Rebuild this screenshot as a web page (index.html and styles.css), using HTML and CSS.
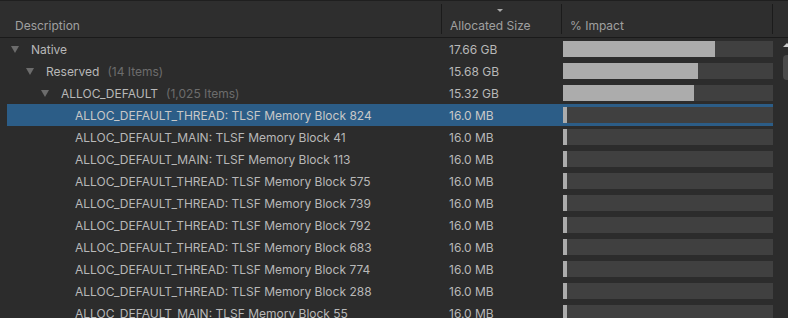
FILE: index.html
```html
<!DOCTYPE html>
<html lang="en">
<head>
    <meta charset="UTF-8">
    <title>Memory Profiler - All Of Memory</title>
    <link rel="stylesheet" href="styles.css">
</head>
<body>
    <div class="tree-view">
        <div class="header">
            <div class="head-cell col-desc">Description</div>
            <div class="head-cell col-size"><span class="sort-arrow"></span>Allocated Size</div>
            <div class="head-cell col-impact">% Impact</div>
            <div class="head-rest"></div>
        </div>

        <div class="body">
            <div class="rows">
                <div class="row">
                    <div class="cell col-desc level-0"><span class="fold"></span>Native</div>
                    <div class="cell col-size">17.66 GB</div>
                    <div class="cell col-impact"><div class="bar"><div class="fill" style="width: 152px"></div></div></div>
                </div>
                <div class="row">
                    <div class="cell col-desc level-1"><span class="fold"></span>Reserved<span class="count">(14 Items)</span></div>
                    <div class="cell col-size">15.68 GB</div>
                    <div class="cell col-impact"><div class="bar"><div class="fill" style="width: 135px"></div></div></div>
                </div>
                <div class="row">
                    <div class="cell col-desc level-2"><span class="fold"></span>ALLOC_DEFAULT<span class="count">(1,025 Items)</span></div>
                    <div class="cell col-size">15.32 GB</div>
                    <div class="cell col-impact"><div class="bar"><div class="fill" style="width: 131px"></div></div></div>
                </div>
                <div class="row selected">
                    <div class="cell col-desc level-3">ALLOC_DEFAULT_THREAD: TLSF Memory Block 824</div>
                    <div class="cell col-size">16.0 MB</div>
                    <div class="cell col-impact"><div class="bar"><div class="fill small"></div></div></div>
                </div>
                <div class="row">
                    <div class="cell col-desc level-3">ALLOC_DEFAULT_MAIN: TLSF Memory Block 41</div>
                    <div class="cell col-size">16.0 MB</div>
                    <div class="cell col-impact"><div class="bar"><div class="fill small"></div></div></div>
                </div>
                <div class="row">
                    <div class="cell col-desc level-3">ALLOC_DEFAULT_MAIN: TLSF Memory Block 113</div>
                    <div class="cell col-size">16.0 MB</div>
                    <div class="cell col-impact"><div class="bar"><div class="fill small"></div></div></div>
                </div>
                <div class="row">
                    <div class="cell col-desc level-3">ALLOC_DEFAULT_THREAD: TLSF Memory Block 575</div>
                    <div class="cell col-size">16.0 MB</div>
                    <div class="cell col-impact"><div class="bar"><div class="fill small"></div></div></div>
                </div>
                <div class="row">
                    <div class="cell col-desc level-3">ALLOC_DEFAULT_THREAD: TLSF Memory Block 739</div>
                    <div class="cell col-size">16.0 MB</div>
                    <div class="cell col-impact"><div class="bar"><div class="fill small"></div></div></div>
                </div>
                <div class="row">
                    <div class="cell col-desc level-3">ALLOC_DEFAULT_THREAD: TLSF Memory Block 792</div>
                    <div class="cell col-size">16.0 MB</div>
                    <div class="cell col-impact"><div class="bar"><div class="fill small"></div></div></div>
                </div>
                <div class="row">
                    <div class="cell col-desc level-3">ALLOC_DEFAULT_THREAD: TLSF Memory Block 683</div>
                    <div class="cell col-size">16.0 MB</div>
                    <div class="cell col-impact"><div class="bar"><div class="fill small"></div></div></div>
                </div>
                <div class="row">
                    <div class="cell col-desc level-3">ALLOC_DEFAULT_THREAD: TLSF Memory Block 774</div>
                    <div class="cell col-size">16.0 MB</div>
                    <div class="cell col-impact"><div class="bar"><div class="fill small"></div></div></div>
                </div>
                <div class="row">
                    <div class="cell col-desc level-3">ALLOC_DEFAULT_THREAD: TLSF Memory Block 288</div>
                    <div class="cell col-size">16.0 MB</div>
                    <div class="cell col-impact"><div class="bar"><div class="fill small"></div></div></div>
                </div>
                <div class="row">
                    <div class="cell col-desc level-3">ALLOC_DEFAULT_MAIN: TLSF Memory Block 55</div>
                    <div class="cell col-size">16.0 MB</div>
                    <div class="cell col-impact"><div class="bar"><div class="fill small"></div></div></div>
                </div>
            </div>

            <div class="scrollbar">
                <span class="scroll-up"></span>
                <div class="thumb"></div>
            </div>
        </div>
    </div>
</body>
</html>
```

FILE: styles.css
```css
* {
    margin: 0;
    padding: 0;
    box-sizing: border-box;
}

html, body {
    width: 788px;
    height: 318px;
    overflow: hidden;
}

body {
    background: #2c2c2c;
    font-family: Inter, 'Liberation Sans', sans-serif;
    font-size: 12px;
    color: #b8b8b8;
}

.tree-view {
    width: 788px;
}

/* 表头 */
.header {
    display: flex;
    height: 38px;
    border-top: 1px solid #1f1f1f;
    border-bottom: 1px solid #1a1a1a;
    background: #2e2e2e;
}

.head-cell {
    position: relative;
    display: flex;
    align-items: flex-end;
    padding-bottom: 4px;
    color: #a0a0a0;
}

.head-cell::after {
    content: '';
    position: absolute;
    right: 0;
    top: 3px;
    bottom: 3px;
    width: 1px;
    background: #1b1b1b;
}

.header .col-desc {
    width: 442px;
    padding-left: 15px;
}

.header .col-size {
    width: 120px;
    padding-left: 8px;
}

.header .col-impact {
    width: 211px;
    padding-left: 8px;
}

.head-rest {
    flex: 1;
}

.sort-arrow {
    position: absolute;
    left: 55px;
    top: 8px;
    width: 0;
    height: 0;
    border-left: 3px solid transparent;
    border-right: 3px solid transparent;
    border-top: 3px solid #a8a8a8;
}

/* 内容区 */
.body {
    display: flex;
}

.rows {
    padding-left: 7px;
    width: 773px;
}

.row {
    display: flex;
    height: 22px;
    align-items: center;
}

.row.selected {
    background: #2c5d87;
    color: #c8c8c8;
}

.cell {
    display: flex;
    align-items: center;
    height: 22px;
    white-space: nowrap;
}

.row .col-desc {
    width: 435px;
}

.row .col-size {
    width: 120px;
    padding-left: 7px;
}

.row .col-impact {
    width: 211px;
    padding: 3px 0 3px 1px;
}

.level-0 { padding-left: 23px; }
.level-1 { padding-left: 38px; }
.level-2 { padding-left: 53px; }
.level-3 { padding-left: 68px; }

.fold {
    width: 0;
    height: 0;
    margin-left: -19px;
    margin-right: 12px;
    border-left: 4px solid transparent;
    border-right: 4px solid transparent;
    border-top: 7px solid #6c6c6c;
}

.count {
    margin-left: 8px;
    color: #6c6c6c;
}

.bar {
    width: 210px;
    height: 16px;
    background: #404040;
}

.fill {
    height: 100%;
    background: #acacac;
}

.fill.small {
    width: 4px;
}

/* 滚动条 */
.scrollbar {
    position: relative;
    flex: 1;
}

.scroll-up {
    position: absolute;
    left: 10px;
    top: 5px;
    width: 0;
    height: 0;
    border-left: 4px solid transparent;
    border-right: 4px solid transparent;
    border-bottom: 4px solid #c8c8c8;
}

.thumb {
    position: absolute;
    left: 10px;
    top: 17px;
    width: 12px;
    height: 25px;
    border-radius: 4px;
    background: #4a4a4a;
}
```
